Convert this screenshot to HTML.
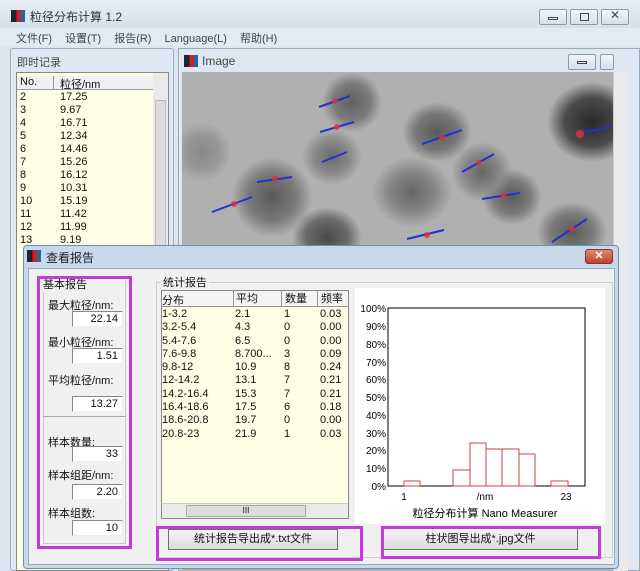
<!DOCTYPE html>
<html><head><meta charset="utf-8"><style>
*{margin:0;padding:0;box-sizing:border-box}
body{width:640px;height:571px;overflow:hidden;background:#dce6f0;font-family:"Liberation Sans","Noto Sans CJK SC",sans-serif;font-size:11px;color:#111;position:relative}
.a{position:absolute}
.row{position:absolute;left:0;height:13px;line-height:13px;font-size:11px}
.box{position:absolute;background:#fff;border:1px solid #888;border-right-color:#eee;border-bottom-color:#eee;text-align:right;padding-right:4px;font-size:11px;line-height:15px;height:16px}
.mag{position:absolute;border:3px solid #c33cd8}
.btn{position:absolute;background:linear-gradient(#f4f4f4,#dcdcdc);border:1px solid #707070;text-align:center;font-size:11px}
.wb{position:absolute;border:1px solid #8a9bb0;border-radius:2px;background:linear-gradient(#f2f6fa,#d5dfea);height:16px}
</style></head><body>
<div class="a" style="left:0;top:0;width:640px;height:28px;background:linear-gradient(#e6eef6,#d4e0ec)"></div>
<div class="a" style="left:11px;top:10px;width:14px;height:12px;background:linear-gradient(90deg,#223 0 40%,#c22 40% 70%,#26a 70%)"></div>
<div class="a" style="left:30px;top:8px;font-size:12px;color:#333">粒径分布计算 1.2</div>
<div class="wb" style="left:539px;top:9px;width:28px"></div><div class="wb" style="left:570px;top:9px;width:28px"></div><div class="wb" style="left:601px;top:9px;width:28px"></div>
<div class="a" style="left:548px;top:17px;width:10px;height:3px;border:1px solid #445"></div>
<div class="a" style="left:580px;top:13px;width:9px;height:8px;border:1px solid #445"></div>
<div class="a" style="left:610px;top:8px;font-size:12px;color:#445">✕</div>
<div class="a" style="left:0;top:28px;width:640px;height:18px;background:#e2eaf3"></div>
<div class="a" style="left:16px;top:30px;font-size:11px;color:#444;word-spacing:10px">文件(F) 设置(T) 报告(R) Language(L) 帮助(H)</div>
<div class="a" style="left:10px;top:48px;width:164px;height:523px;background:#dfe8f2;border:1px solid #9aaabb;border-radius:3px"></div>
<div class="a" style="left:17px;top:54px;font-size:11px;color:#444">即时记录</div>
<div class="a" style="left:16px;top:72px;width:153px;height:499px;background:#ffffe6;border:1px solid #888"></div>
<div class="a" style="left:17px;top:76px;width:136px;height:14px;background:#f0f0f0;border-bottom:1px solid #999"></div>
<div class="a" style="left:20px;top:76px;font-size:11px">No.</div>
<div class="a" style="left:53px;top:76px;height:14px;border-left:1px solid #999;padding-left:6px;font-size:11px">粒径/nm</div>
<div class="a" style="left:153px;top:73px;width:15px;height:497px;background:#eaeaea"></div>
<div class="a" style="left:155px;top:100px;width:11px;height:150px;background:#dcdcdc;border:1px solid #bbb"></div>
<div class="a" style="left:20px;top:91px;width:130px">
<div class="row" style="top:0">2</div><div class="row" style="top:0;left:40px">17.25</div>
<div class="row" style="top:13px">3</div><div class="row" style="top:13px;left:40px">9.67</div>
<div class="row" style="top:26px">4</div><div class="row" style="top:26px;left:40px">16.71</div>
<div class="row" style="top:39px">5</div><div class="row" style="top:39px;left:40px">12.34</div>
<div class="row" style="top:52px">6</div><div class="row" style="top:52px;left:40px">14.46</div>
<div class="row" style="top:65px">7</div><div class="row" style="top:65px;left:40px">15.26</div>
<div class="row" style="top:78px">8</div><div class="row" style="top:78px;left:40px">16.12</div>
<div class="row" style="top:91px">9</div><div class="row" style="top:91px;left:40px">10.31</div>
<div class="row" style="top:104px">10</div><div class="row" style="top:104px;left:40px">15.19</div>
<div class="row" style="top:117px">11</div><div class="row" style="top:117px;left:40px">11.42</div>
<div class="row" style="top:130px">12</div><div class="row" style="top:130px;left:40px">11.99</div>
<div class="row" style="top:143px">13</div><div class="row" style="top:143px;left:40px">9.19</div>
</div>
<div class="a" style="left:178px;top:48px;width:462px;height:523px;background:#dfe8f2;border:1px solid #9aaabb"></div>
<div class="a" style="left:184px;top:55px;width:14px;height:12px;background:linear-gradient(90deg,#223 0 40%,#c22 40% 70%,#26a 70%)"></div>
<div class="a" style="left:202px;top:54px;font-size:12px;color:#444">Image</div>
<div class="wb" style="left:568px;top:54px;width:28px"></div><div class="wb" style="left:600px;top:54px;width:14px"></div>
<div class="a" style="left:577px;top:61px;width:10px;height:3px;border:1px solid #445"></div>
<div class="a" style="left:182px;top:72px;width:431px;height:499px;background:
radial-gradient(ellipse 45px 40px at 410px 50px,#2a2a2a 0,#4a4a4a 60%,transparent 100%),
radial-gradient(ellipse 30px 30px at 170px 30px,#606060 0,#7a7a7a 60%,transparent 100%),
radial-gradient(ellipse 35px 30px at 255px 60px,#5a5a5a 0,#777 60%,transparent 100%),
radial-gradient(ellipse 30px 30px at 300px 100px,#666 0,#888 60%,transparent 100%),
radial-gradient(ellipse 30px 28px at 330px 125px,#5a5a5a 0,#7a7a7a 60%,transparent 100%),
radial-gradient(ellipse 40px 35px at 230px 120px,#666 0,#888 60%,transparent 100%),
radial-gradient(ellipse 40px 40px at 90px 125px,#5a5a5a 0,#7a7a7a 60%,transparent 100%),
radial-gradient(ellipse 30px 28px at 150px 85px,#6a6a6a 0,#8a8a8a 60%,transparent 100%),
radial-gradient(ellipse 35px 30px at 145px 165px,#4a4a4a 0,#6a6a6a 60%,transparent 100%),
radial-gradient(ellipse 35px 30px at 390px 160px,#5a5a5a 0,#7a7a7a 60%,transparent 100%),
radial-gradient(ellipse 30px 30px at 20px 80px,#888 0,#999 60%,transparent 100%),
#b0b0b0"></div>
<div class="a" style="left:613px;top:72px;width:15px;height:499px;background:#eaeaea;border-left:1px solid #ccc"></div>
<svg class="a" style="left:182px;top:72px" width="431" height="180">
<g stroke="#2233cc" stroke-width="2"><line x1="30" y1="140" x2="70" y2="125"/><line x1="75" y1="110" x2="110" y2="105"/><line x1="137" y1="35" x2="168" y2="24"/><line x1="138" y1="60" x2="172" y2="50"/><line x1="140" y1="90" x2="165" y2="80"/><line x1="240" y1="72" x2="280" y2="58"/><line x1="280" y1="100" x2="312" y2="82"/><line x1="300" y1="127" x2="338" y2="121"/><line x1="400" y1="60" x2="430" y2="55"/><line x1="225" y1="167" x2="262" y2="158"/><line x1="370" y1="170" x2="405" y2="147"/></g>
<g fill="#d33" opacity=".8"><circle cx="52" cy="132" r="3"/><circle cx="93" cy="107" r="3"/><circle cx="153" cy="29" r="3"/><circle cx="155" cy="55" r="3"/><circle cx="260" cy="66" r="3"/><circle cx="297" cy="91" r="3"/><circle cx="322" cy="124" r="3"/><circle cx="398" cy="62" r="4"/><circle cx="245" cy="163" r="3"/><circle cx="390" cy="157" r="3"/></g>
</svg>
<div class="a" style="left:23px;top:245px;width:596px;height:324px;background:#c7d8ea;border:1px solid #6a8fb5;border-radius:4px"></div>
<div class="a" style="left:27px;top:250px;width:14px;height:12px;background:linear-gradient(90deg,#223 0 40%,#c22 40% 70%,#26a 70%)"></div>
<div class="a" style="left:46px;top:249px;font-size:12px;color:#222">查看报告</div>
<div class="a" style="left:585px;top:249px;width:28px;height:15px;background:linear-gradient(#e08a70,#c0432a);border:1px solid #833;border-radius:3px;color:#fff;text-align:center;font-size:11px;line-height:13px;font-weight:bold">✕</div>
<div class="a" style="left:28px;top:268px;width:587px;height:297px;background:#f0f0f0;border:1px solid #9ab"></div>
<div class="a" style="left:43px;top:276px;width:83px;height:268px;border:1px solid #ccc"></div>
<div class="a" style="left:43px;top:276px;font-size:11px;background:#f0f0f0">基本报告</div>
<div class="a" style="left:48px;top:297px">最大粒径/nm:</div><div class="box" style="left:72px;top:311px;width:51px">22.14</div>
<div class="a" style="left:48px;top:334px">最小粒径/nm:</div><div class="box" style="left:72px;top:348px;width:51px">1.51</div>
<div class="a" style="left:48px;top:372px">平均粒径/nm:</div><div class="box" style="left:72px;top:396px;width:51px">13.27</div>
<div class="a" style="left:43px;top:416px;width:83px;border-top:1px solid #aaa"></div>
<div class="a" style="left:48px;top:434px">样本数量:</div><div class="box" style="left:72px;top:446px;width:51px">33</div>
<div class="a" style="left:48px;top:467px">样本组距/nm:</div><div class="box" style="left:72px;top:484px;width:51px">2.20</div>
<div class="a" style="left:48px;top:505px">样本组数:</div><div class="box" style="left:72px;top:520px;width:51px">10</div>
<div class="mag" style="left:37px;top:276px;width:95px;height:273px"></div>
<div class="a" style="left:156px;top:282px;width:457px;height:276px;border:1px solid #ccc"></div>
<div class="a" style="left:161px;top:274px;background:#f0f0f0;padding:0 2px">统计报告</div>
<div class="a" style="left:161px;top:290px;width:188px;height:229px;background:#ffffe6;border:1px solid #888;overflow:hidden">
<div class="a" style="left:0;top:0;width:188px;height:16px;background:#f4f4f4;border-bottom:1px solid #999"></div>
<div class="a" style="left:0;top:1px">分布</div><div class="a" style="left:71px;top:0;height:16px;border-left:1px solid #999;padding-left:2px;line-height:16px">平均</div><div class="a" style="left:119px;top:0;height:16px;border-left:1px solid #999;padding-left:3px;line-height:16px">数量</div><div class="a" style="left:155px;top:0;height:16px;border-left:1px solid #999;padding-left:3px;line-height:16px">频率</div>
<div class="a" style="left:0;top:17px;width:190px;line-height:13.3px;font-size:11px">
<div style="display:flex"><span style="width:73px">1-3.2</span><span style="width:49px">2.1</span><span style="width:36px">1</span>0.03</div>
<div style="display:flex"><span style="width:73px">3.2-5.4</span><span style="width:49px">4.3</span><span style="width:36px">0</span>0.00</div>
<div style="display:flex"><span style="width:73px">5.4-7.6</span><span style="width:49px">6.5</span><span style="width:36px">0</span>0.00</div>
<div style="display:flex"><span style="width:73px">7.6-9.8</span><span style="width:49px">8.700...</span><span style="width:36px">3</span>0.09</div>
<div style="display:flex"><span style="width:73px">9.8-12</span><span style="width:49px">10.9</span><span style="width:36px">8</span>0.24</div>
<div style="display:flex"><span style="width:73px">12-14.2</span><span style="width:49px">13.1</span><span style="width:36px">7</span>0.21</div>
<div style="display:flex"><span style="width:73px">14.2-16.4</span><span style="width:49px">15.3</span><span style="width:36px">7</span>0.21</div>
<div style="display:flex"><span style="width:73px">16.4-18.6</span><span style="width:49px">17.5</span><span style="width:36px">6</span>0.18</div>
<div style="display:flex"><span style="width:73px">18.6-20.8</span><span style="width:49px">19.7</span><span style="width:36px">0</span>0.00</div>
<div style="display:flex"><span style="width:73px">20.8-23</span><span style="width:49px">21.9</span><span style="width:36px">1</span>0.03</div>
</div>
<div class="a" style="left:0;top:212px;width:188px;height:16px;background:#eaeaea;border-top:1px solid #ccc"></div>
<div class="a" style="left:24px;top:214px;width:120px;height:12px;background:#dcdcdc;border:1px solid #aaa;text-align:center;font-size:8px;line-height:10px">III</div>
</div>
<div class="a" style="left:355px;top:288px;width:250px;height:236px;background:#fff"></div>
<svg class="a" style="left:355px;top:288px" width="250" height="236" font-family="Liberation Sans" font-size="10">
<rect x="33" y="20" width="197" height="178" fill="#fff" stroke="#000"/>
<g text-anchor="end">
<text x="31" y="24">100%</text><text x="31" y="42">90%</text><text x="31" y="60">80%</text><text x="31" y="78">70%</text><text x="31" y="95">60%</text><text x="31" y="113">50%</text><text x="31" y="131">40%</text><text x="31" y="149">30%</text><text x="31" y="166">20%</text><text x="31" y="184">10%</text><text x="31" y="202">0%</text></g>
<g fill="none" stroke="#c44"><rect x="49" y="193" width="16" height="5"/><rect x="98" y="182" width="17" height="16"/><rect x="115" y="155" width="16" height="43"/><rect x="131" y="161" width="16" height="37"/><rect x="147" y="161" width="17" height="37"/><rect x="164" y="166" width="16" height="32"/><rect x="196" y="193" width="17" height="5"/></g>
<text x="49" y="212" text-anchor="middle">1</text><text x="130" y="212" text-anchor="middle">/nm</text><text x="211" y="212" text-anchor="middle">23</text>
<text x="130" y="229" text-anchor="middle" font-family="Liberation Sans,Noto Sans CJK SC" font-size="11">粒径分布计算 Nano Measurer</text>
</svg>
<div class="btn" style="left:168px;top:529px;width:170px;height:21px;line-height:19px">统计报告导出成*.txt文件</div>
<div class="mag" style="left:156px;top:526px;width:207px;height:35px"></div>
<div class="btn" style="left:383px;top:528px;width:195px;height:22px;line-height:20px">柱状图导出成*.jpg文件</div>
<div class="mag" style="left:381px;top:526px;width:220px;height:33px"></div>
</body></html>
